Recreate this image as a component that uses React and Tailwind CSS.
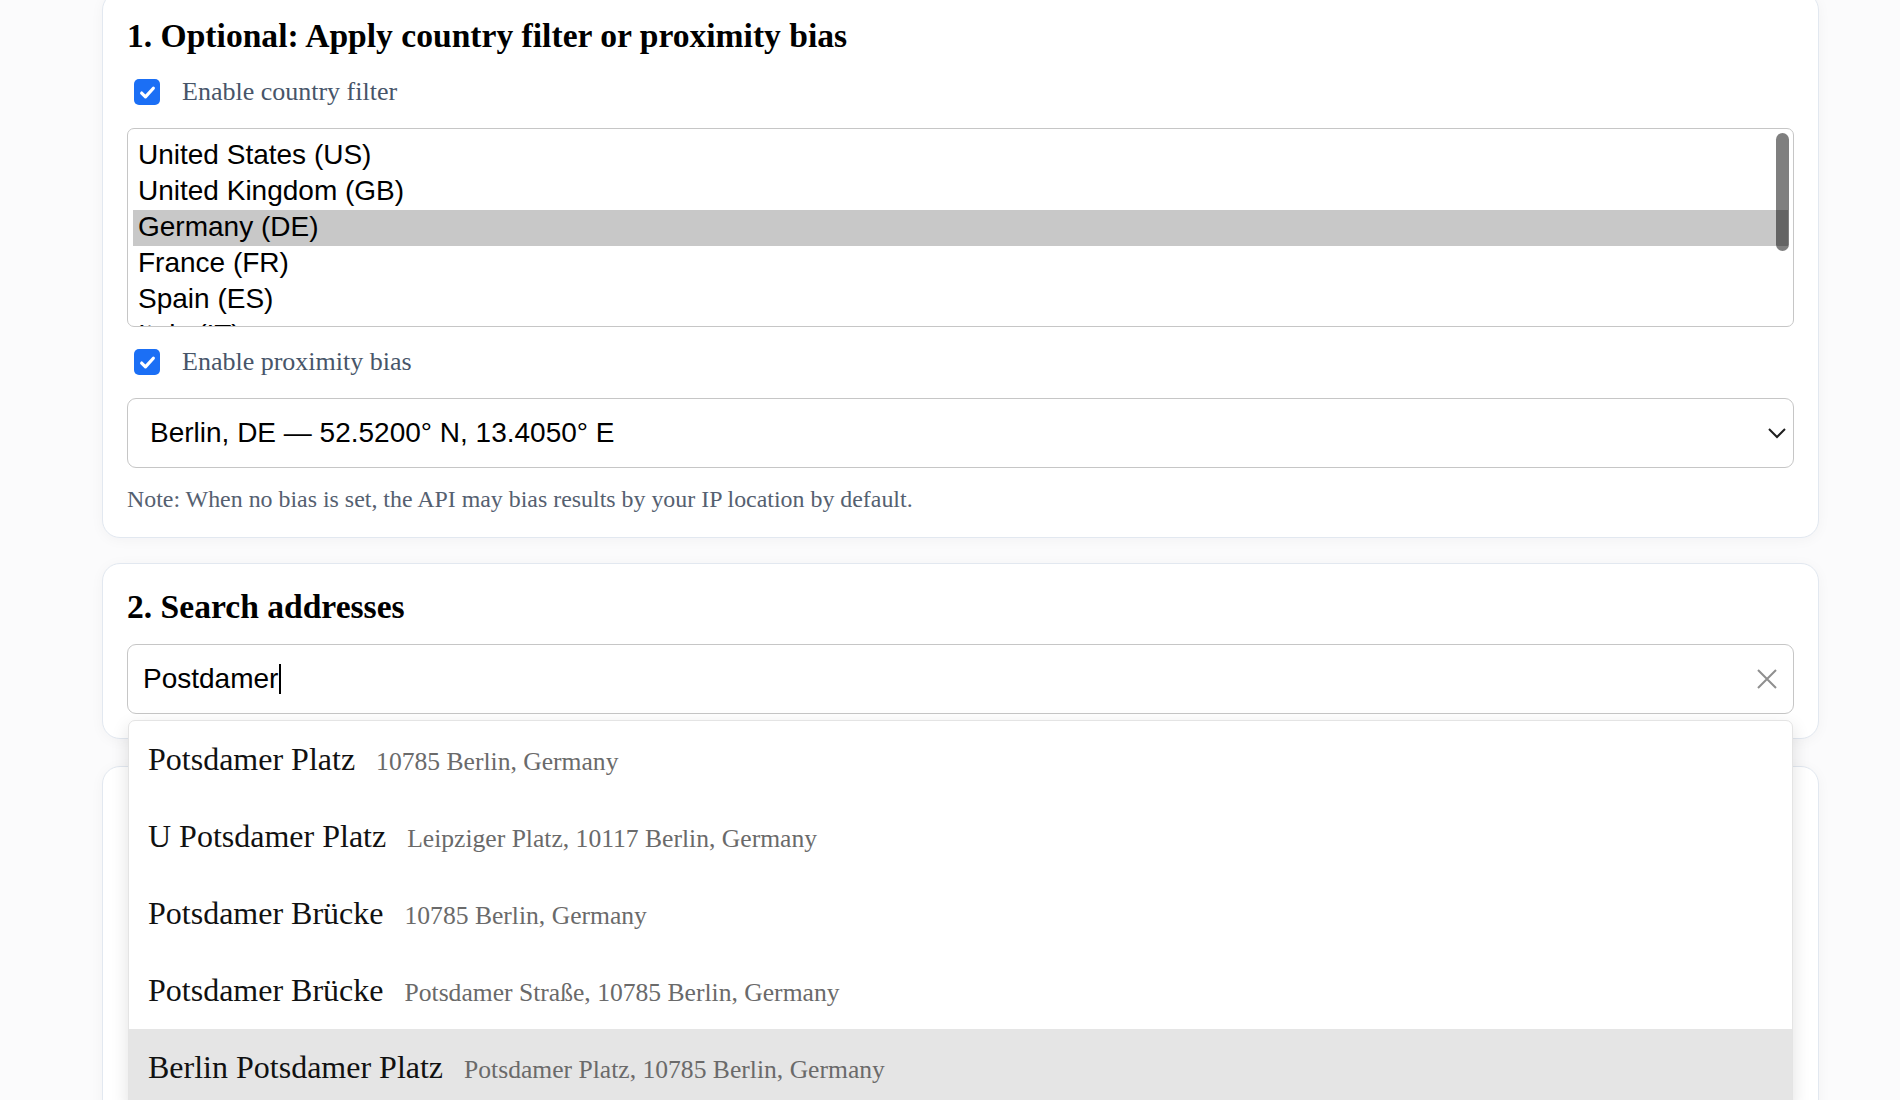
import React from 'react';

const countries = [
  'United States (US)',
  'United Kingdom (GB)',
  'Germany (DE)',
  'France (FR)',
  'Spain (ES)',
  'Italy (IT)',
];

const results = [
  { name: 'Potsdamer Platz', detail: '10785 Berlin, Germany' },
  { name: 'U Potsdamer Platz', detail: 'Leipziger Platz, 10117 Berlin, Germany' },
  { name: 'Potsdamer Brücke', detail: '10785 Berlin, Germany' },
  { name: 'Potsdamer Brücke', detail: 'Potsdamer Straße, 10785 Berlin, Germany' },
  { name: 'Berlin Potsdamer Platz', detail: 'Potsdamer Platz, 10785 Berlin, Germany', active: true },
];

const serif = "font-['Liberation_Serif','Times_New_Roman',serif]";
const sans = "font-['Liberation_Sans',Arial,sans-serif]";

function Checkbox({ label }) {
  return (
    <label className="flex h-[30px] items-center">
      <span className="ml-[7px] flex h-[26px] w-[26px] items-center justify-center rounded-[5px] bg-[#1b6ff5]">
        <svg width="17" height="17" viewBox="0 0 16 16" fill="none">
          <path d="M2.5 8.5l3.6 3.6L13.5 4" stroke="white" strokeWidth="3" strokeLinecap="round" strokeLinejoin="round" />
        </svg>
      </span>
      <span className={`${serif} ml-[22px] text-[26px] leading-[30px] text-[#475569]`}>{label}</span>
    </label>
  );
}

function Card({ className = '', children }) {
  return (
    <section
      className={`w-[1717px] rounded-[18px] border-[1.5px] border-[#e2e8f0] bg-white px-[24px] pb-[24px] pt-[24px] shadow-[0_2px_14px_rgba(15,23,42,0.04)] ${className}`}
    >
      {children}
    </section>
  );
}

export default function App() {
  return (
    <div className="min-h-screen overflow-hidden bg-[#fbfbfc] pl-[102px] text-black">
      <Card className="-mt-[8px]">
        <h2 className={`${serif} text-[33.6px] font-bold leading-[38px]`}>
          1. Optional: Apply country filter or proximity bias
        </h2>

        <div className="mt-[22px]">
          <Checkbox label="Enable country filter" />
        </div>

        <div className={`${sans} relative mt-[21px] h-[199px] overflow-hidden rounded-[7px] border-[1.5px] border-[#c6c6c6] bg-white px-[5px] pt-[9px]`}>
          {countries.map((c) => (
            <div
              key={c}
              className={`h-[36px] pb-[2px] pl-[5px] text-[28px] leading-[33px] ${c === 'Germany (DE)' ? 'bg-[#c8c8c8]' : ''}`}
            >
              {c}
            </div>
          ))}
          <div className="absolute right-[4px] top-[4px] h-[118px] w-[13px] rounded-full bg-black/50" />
        </div>

        <div className="mt-[20px]">
          <Checkbox label="Enable proximity bias" />
        </div>

        <div className={`${sans} mt-[21px] flex h-[70px] items-center justify-between rounded-[9px] border-[1.5px] border-[#c6c6c6] bg-white pl-[22px] pr-[6px]`}>
          <span className="text-[28px] leading-[32px]">Berlin, DE — 52.5200° N, 13.4050° E</span>
          <svg width="20" height="12" viewBox="0 0 20 12" fill="none">
            <path d="M2 2l8 8 8-8" stroke="#1f1f1f" strokeWidth="2" />
          </svg>
        </div>

        <p className={`${serif} mt-[18px] text-[23.9px] leading-[27px] text-[#556070]`}>
          Note: When no bias is set, the API may bias results by your IP location by default.
        </p>
      </Card>

      <Card className="relative z-10 mt-[25px]">
        <h2 className={`${serif} text-[33.6px] font-bold leading-[38px]`}>2. Search addresses</h2>

        <div className="relative mt-[18px]">
          <div className={`${sans} flex h-[70px] items-center justify-between rounded-[9px] border-[1.5px] border-[#c6c6c6] bg-white pl-[15px] pr-[15px]`}>
            <span className="flex items-center text-[28px] leading-[32px]">
              Postdamer
              <span className="ml-[1px] inline-block h-[30px] w-[2px] bg-black" />
            </span>
            <svg width="22" height="22" viewBox="0 0 22 22" fill="none">
              <path d="M2 2l18 18M20 2L2 20" stroke="#8f8f8f" strokeWidth="2" />
            </svg>
          </div>

          <ul className="absolute left-[1px] right-[1px] top-[calc(100%+6px)] overflow-hidden rounded-t-[7px] border-[1.5px] border-[#e4e4e4] bg-white shadow-[0_6px_18px_rgba(0,0,0,0.12)]">
            {results.map((r, i) => (
              <li
                key={i}
                className={`flex h-[77px] items-center pl-[19px] ${r.active ? 'bg-[#e5e5e5]' : ''}`}
              >
                <div className={`${serif} flex items-baseline`}>
                  <span className="text-[32px] leading-[37px] text-[#111]">{r.name}</span>
                  <span className="ml-[21px] text-[25.6px] leading-[30px] text-[#6a6a6a]">{r.detail}</span>
                </div>
              </li>
            ))}
          </ul>
        </div>
      </Card>

      <Card className="mt-[27px] h-[600px]">
        <div />
      </Card>
    </div>
  );
}
